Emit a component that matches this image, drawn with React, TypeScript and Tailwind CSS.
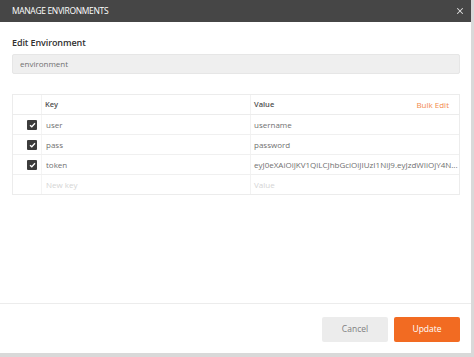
import { X } from 'lucide-react';

const rows = [
  { key: 'user', value: 'username' },
  { key: 'pass', value: 'password' },
  { key: 'token', value: 'eyJ0eXAiOiJKV1QiLCJhbGciOiJIUzI1NiJ9.eyJzdWIiOjY4N...' },
];

function Check() {
  return (
    <span className="w-[10px] h-[10px] rounded-[1px] bg-[#3c3c3c] flex items-center justify-center">
      <svg width="7" height="6" viewBox="0 0 7 6" fill="none">
        <path d="M1 3.2 L2.8 4.8 L6 1.2" stroke="white" strokeWidth="1.3" />
      </svg>
    </span>
  );
}

export default function App() {
  return (
    <div className="w-[474px] h-[357px] bg-[#d9d9d9] font-['Open_Sans',sans-serif]">
      <div className="w-[471px] h-[353px] bg-white flex flex-col">
        {/* header */}
        <div className="h-[22px] bg-[#464646] flex items-center justify-between pl-3 pr-[6px]">
          <span className="text-white text-[8.5px] tracking-[-0.35px] leading-none">MANAGE ENVIRONMENTS</span>
          <X className="w-[10px] h-[10px] text-[#e0e0e0]" strokeWidth={2.5} />
        </div>

        {/* body */}
        <div className="flex-1 px-3 pt-[14px]">
          <div className="text-[9px] font-semibold text-[#303030] leading-[13px] tracking-[-0.1px]">Edit Environment</div>
          <div className="mt-[5px] h-[20px] w-[448px] bg-[#efefef] border border-[#e6e6e6] rounded-[2px] flex items-center px-[7px] text-[8px] text-[#707070]">
            environment
          </div>

          <div className="mt-[20px] w-[448px] border border-[#ececec] text-[8px]">
            <div className="flex h-[20px] items-center border-b border-[#ececec]">
              <div className="w-[29px] h-full border-r border-[#f2f2f2]" />
              <div className="w-[209px] pl-[3px] font-semibold text-[7.5px] text-[#505050] h-full flex items-center border-r border-[#f2f2f2]">Key</div>
              <div className="flex-1 pl-[3px] pr-[10px] flex justify-between items-center">
                <span className="font-semibold text-[7.5px] text-[#505050]">Value</span>
                <span className="text-[#f2894a] text-[8px]">Bulk Edit</span>
              </div>
            </div>
            {rows.map((r) => (
              <div key={r.key} className="flex h-[20px] items-center border-b border-[#f0f0f0]">
                <div className="w-[29px] h-full flex items-center justify-end pr-[4px] border-r border-[#f4f4f4]">
                  <Check />
                </div>
                <div className="w-[209px] h-full pl-[4px] flex items-center text-[#707070] border-r border-[#f2f2f2]">{r.key}</div>
                <div className="flex-1 min-w-0 pl-[3px] pr-[1px] text-[#707070] truncate">{r.value}</div>
              </div>
            ))}
            <div className="flex h-[19px] items-center">
              <div className="w-[29px] h-full border-r border-[#f4f4f4]" />
              <div className="w-[209px] h-full pl-[4px] flex items-center text-[#d4d4d4] border-r border-[#f2f2f2]">New key</div>
              <div className="flex-1 pl-[3px] text-[#d4d4d4]">Value</div>
            </div>
          </div>
        </div>

        {/* footer */}
        <div className="h-[50px] border-t border-[#ececec] flex items-center justify-end gap-[6px] pr-[11px] pt-[2px]">
          <button className="w-[66px] h-[25px] rounded-[2px] bg-[#ececec] text-[8.5px] text-[#808080]">Cancel</button>
          <button className="w-[66px] h-[25px] rounded-[2px] bg-[#f26b22] text-[8.5px] text-white">Update</button>
        </div>
      </div>
    </div>
  );
}
